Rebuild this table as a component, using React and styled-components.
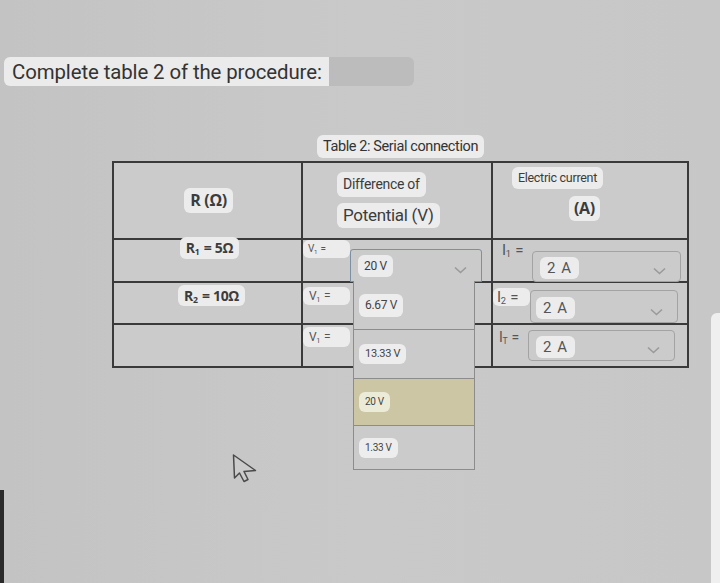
import React from "react";
import styled, { createGlobalStyle } from "styled-components";

const GlobalStyle = createGlobalStyle`
  html, body {
    margin: 0;
    padding: 0;
    background: #c6c6c6;
    font-family: Roboto, "Liberation Sans", sans-serif;
  }
`;

const Page = styled.div`
  position: relative;
  width: 720px;
  height: 583px;
  overflow: hidden;
  padding-top: 57px;
  box-sizing: border-box;
  background: linear-gradient(90deg, #c3c3c3 0%, #c9c9c9 50%, #c7c7c7 100%);
`;

const TitleRow = styled.div`
  display: flex;
  margin-left: 4px;
`;

const TitlePill = styled.div`
  height: 29px;
  display: flex;
  align-items: center;
  padding: 0 7px 0 8px;
  background: #ebebeb;
  border-radius: 6px 0 0 6px;
  font-size: 20.4px;
  color: #333;
  letter-spacing: -0.1px;
`;

const TitleBlank = styled.div`
  width: 85px;
  height: 29px;
  background: #bcbcbc;
  border-radius: 0 6px 6px 0;
`;

const Caption = styled.div`
  display: inline-flex;
  align-items: center;
  height: 23px;
  margin: 49px 0 3px 317px;
  padding: 0 6px;
  background: #ececec;
  border-radius: 6px;
  font-size: 14.5px;
  letter-spacing: -0.4px;
  color: #333;
`;

const Table = styled.div`
  margin-left: 112px;
  width: 577px;
  box-sizing: border-box;
  display: grid;
  grid-template-columns: 187px 188px 194px;
  grid-template-rows: 75px 41px 40px 41px;
  gap: 2px;
  padding: 2px;
  background: #3a3a3a;
`;

const Cell = styled.div`
  position: relative;
  background: #cbcbcb;
`;

const HeadCell = styled(Cell)`
  display: flex;
  flex-direction: column;
  align-items: ${(p) => (p.$center ? "center" : "flex-start")};
  justify-content: ${(p) => (p.$center ? "center" : "flex-start")};
  padding: ${(p) => p.$pad || "0"};
  gap: ${(p) => p.$gap || "0"};
`;

const Pill = styled.span`
  display: inline-block;
  box-sizing: border-box;
  padding: 0 ${(p) => p.$px || 6}px;
  height: ${(p) => p.$h || 22}px;
  line-height: ${(p) => p.$h || 22}px;
  background: ${(p) => p.$bg || "#ececec"};
  border-radius: 6px;
  font-size: ${(p) => p.$size || 13}px;
  font-weight: ${(p) => (p.$bold ? 700 : 400)};
  font-family: ${(p) =>
    p.$bold ? '"Open Sans", "Liberation Sans", sans-serif' : 'Roboto, "Liberation Sans", sans-serif'};
  color: ${(p) => p.$color || "#3c3c3c"};
  letter-spacing: ${(p) => p.$ls || "-0.3px"};
  margin-left: ${(p) => p.$ml || 0}px;
  margin-top: ${(p) => p.$mt || 0}px;
  white-space: nowrap;
  sub {
    font-size: 0.62em;
    vertical-align: -0.25em;
    line-height: 0;
    margin-right: 1px;
  }
`;

const RCell = styled(Cell)`
  display: flex;
  justify-content: center;
  align-items: flex-start;
  padding-left: ${(p) => p.$shift || 0}px;
`;

const VCell = styled(Cell)`
  display: grid;
  grid-template-columns: 47px 1fr;
  align-items: start;
  z-index: ${(p) => (p.$open ? 5 : 1)};
`;

const ICell = styled(Cell)`
  display: grid;
  grid-template-columns: ${(p) => p.$col || 39}px 1fr;
  align-items: start;
  padding-right: ${(p) => p.$pr || 6}px;
`;

const Select = styled.div`
  position: relative;
  box-sizing: border-box;
  height: ${(p) => p.$h || 31}px;
  width: ${(p) => (p.$w ? `${p.$w}px` : "auto")};
  margin-top: ${(p) => p.$mt || 0}px;
  display: flex;
  align-items: flex-start;
  justify-content: space-between;
  padding: ${(p) => p.$pad || "5px 14px 0 7px"};
  border: ${(p) => (p.$focus ? "1.5px solid #7d8fa2" : "1px solid #a3a3a3")};
  border-radius: ${(p) => (p.$focus ? "3px 3px 0 0" : "4px")};
  background: #cbcbcb;
`;

const Chevron = styled.svg`
  width: 13px;
  height: 8px;
  margin-top: ${(p) => p.$mt || 10}px;
  flex: none;
`;

const Dropdown = styled.div`
  position: absolute;
  top: 100%;
  left: 2px;
  width: 122px;
  border: 1px solid #8c8c8c;
  border-top: none;
  background: #cbcbcb;
  box-sizing: border-box;
`;

const Option = styled.div`
  height: ${(p) => p.$h}px;
  display: flex;
  align-items: center;
  padding-left: 5px;
  background: ${(p) => (p.$active ? "#ccc6a4" : "#cbcbcb")};
  border-bottom: 1px solid #8c8c8c;
  &:last-child {
    border-bottom: none;
  }
`;

const Cursor = styled.svg`
  position: absolute;
  left: 231px;
  top: 453px;
  width: 28px;
  height: 31px;
`;

const SidePanel = styled.div`
  position: absolute;
  right: 0;
  top: 313px;
  width: 9px;
  bottom: 0;
  background: #efefef;
  border-radius: 6px 0 0 0;
`;

const EdgeShadow = styled.div`
  position: absolute;
  left: 0;
  top: 490px;
  width: 4px;
  bottom: 0;
  background: #2a2a2a;
`;

const Down = ({ mt }) => (
  <Chevron $mt={mt} viewBox="0 0 13 8">
    <path d="M1 1.5 L6.5 6.5 L12 1.5" fill="none" stroke="#9a9a9a" strokeWidth="1.6" />
  </Chevron>
);

const options = [
  { label: "6.67 V", h: 48, size: 12 },
  { label: "13.33 V", h: 48, size: 11 },
  { label: "20 V", h: 46, size: 10, active: true },
  { label: "1.33 V", h: 43, size: 10 },
];

export default function App() {
  return (
    <>
      <GlobalStyle />
      <Page>
        <TitleRow>
          <TitlePill>Complete table 2 of the procedure:</TitlePill>
          <TitleBlank />
        </TitleRow>
        <Caption>Table 2: Serial connection</Caption>
        <Table>
          <HeadCell $center>
            <Pill $bold $size={16} $h={25} $ml={2}>R (Ω)</Pill>
          </HeadCell>
          <HeadCell $pad="9px 0 0 34px" $gap="6px">
            <Pill $size={14} $h={25}>Difference of</Pill>
            <Pill $size={17} $h={25}>Potential (V)</Pill>
          </HeadCell>
          <HeadCell $pad="4px 0 0 19px" $gap="7px">
            <Pill $size={12.5} $h={22}>Electric current</Pill>
            <Pill $bold $size={16} $h={25} $px={5} $ml={57}>(A)</Pill>
          </HeadCell>

          <RCell $shift={4}>
            <Pill $bold $size={14} $h={22} $mt={-3}>
              R<sub>1</sub> = 5Ω
            </Pill>
          </RCell>
          <VCell $open>
            <Pill $size={10} $h={18} $px={5} $mt={0} $color="#555">
              V<sub>1</sub> =
            </Pill>
            <Select $focus $w={132} $h={33} $mt={9}>
              <Pill $size={12} $h={22} $px={6}>20 V</Pill>
              <Down mt={11} />
              <Dropdown>
                {options.map((o) => (
                  <Option key={o.label} $h={o.h} $active={o.active}>
                    <Pill
                      $size={o.size}
                      $h={o.size > 11 ? 23 : 20}
                      $bg={o.active ? "rgba(240,238,222,0.9)" : "rgba(240,240,240,0.92)"}
                      $color="#444"
                    >
                      {o.label}
                    </Pill>
                  </Option>
                ))}
              </Dropdown>
            </Select>
          </VCell>
          <ICell $col={39}>
            <Pill $size={15} $h={18} $px={2} $ml={7} $mt={1} $bg="transparent" $color="#555">
              I<sub>1</sub> =
            </Pill>
            <Select $mt={11}>
              <Pill $size={15} $h={22} $px={7} $ls="1px" $color="#555" $mt={0}>2 A</Pill>
              <Down mt={10} />
            </Select>
          </ICell>

          <RCell $shift={8}>
            <Pill $bold $size={14} $h={21} $mt={2}>
              R<sub>2</sub> = 10Ω
            </Pill>
          </RCell>
          <VCell>
            <Pill $size={12} $h={18} $px={6} $mt={4} $color="#555">
              V<sub>1</sub> =
            </Pill>
          </VCell>
          <ICell $col={37} $pr={9}>
            <Pill $size={15} $h={18} $px={4} $mt={5} $color="#555">
              I<sub>2</sub> =
            </Pill>
            <Select $mt={7} $h={33} $pad="6px 14px 0 5px">
              <Pill $size={15} $h={22} $px={7} $ls="1px" $color="#555">2 A</Pill>
              <Down mt={11} />
            </Select>
          </ICell>

          <Cell />
          <VCell>
            <Pill $size={12} $h={20} $px={6} $mt={2} $color="#555">
              V<sub>1</sub> =
            </Pill>
          </VCell>
          <ICell $col={35} $pr={12}>
            <Pill $size={14} $h={18} $px={2} $ml={4} $mt={3} $bg="transparent" $color="#555">
              I<sub>T</sub> =
            </Pill>
            <Select $mt={5} $pad="5px 14px 0 7px">
              <Pill $size={15} $h={22} $px={7} $ls="1px" $color="#555">2 A</Pill>
              <Down mt={10} />
            </Select>
          </ICell>
        </Table>

        <Cursor viewBox="0 0 28 31">
          <path
            d="M2.5 2 L3.5 25 L8.5 20 L13 28.5 L17 26.5 L13 18.5 L24.5 17.5 Z"
            fill="#cbcbcb"
            stroke="#4a4a4a"
            strokeWidth="1.5"
            strokeLinejoin="round"
          />
        </Cursor>
        <SidePanel />
        <EdgeShadow />
      </Page>
    </>
  );
}
